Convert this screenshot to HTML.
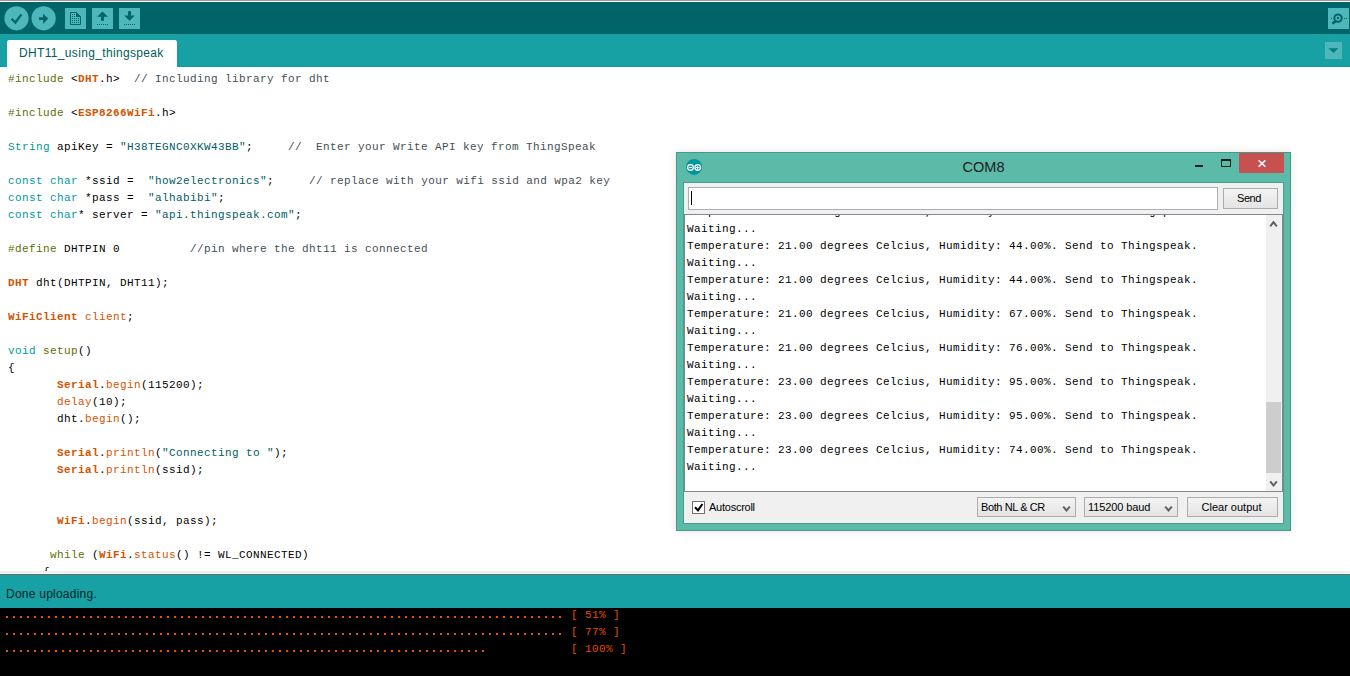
<!DOCTYPE html>
<html>
<head>
<meta charset="utf-8">
<title>DHT11_using_thingspeak | Arduino</title>
<style>
*{box-sizing:border-box;margin:0;padding:0}
html,body{width:1350px;height:676px;overflow:hidden;background:#fff;font-family:"Liberation Sans",sans-serif}
.abs{position:absolute}
#topline{left:0;top:0;width:1350px;height:2px;background:linear-gradient(#9a9a9a 0,#9a9a9a 50%,#fff 50%,#fff 100%)}
#toolbar{left:0;top:2px;width:1350px;height:32px;background:#006468}
#tabbar{left:0;top:34px;width:1350px;height:33px;background:#17a1a5;border-bottom:1px solid #0a9ba0}
#tab{left:7px;top:40px;width:170px;height:27px;background:#fff;border-radius:2.5px 2.5px 0 0;color:#005b5b;font-size:12px;letter-spacing:0.34px;line-height:26px;padding-left:12px;white-space:nowrap}
.cbtn{width:24px;height:24px;border-radius:50%;background:#4db7bb;top:4px}
.sbtn{width:21px;height:21px;background:#4db7bb;top:6px}
#editor{left:0;top:67px;width:1350px;height:505px;background:#fff;overflow:hidden}
pre{font-family:"Liberation Mono",monospace;font-size:11px;letter-spacing:0.4px;line-height:17px;white-space:pre}
#code{position:absolute;left:8px;top:4px;color:#000}
.k{color:#00979c}.s{color:#005c5f}.c{color:#434f54}.p{color:#5e6d03}.o{color:#d35400}.ob{color:#d35400;font-weight:bold}
#split{left:0;top:571px;width:1350px;height:4px;background:linear-gradient(#eee 0,#eee 50%,#fafafa 50%,#fafafa 75%,#6e6565 75%,#6e6565 100%)}
#status{left:0;top:575px;width:1350px;height:33px;background:#17a1a5;color:#002325;font-size:12px;letter-spacing:0.24px;line-height:38px;padding-left:6px}
#console{left:0;top:608px;width:1350px;height:68px;background:#000;overflow:hidden}
#console pre{position:absolute;left:4px;top:-1px;color:#e34c00}
.dots{position:absolute;left:6px;height:2px;background:repeating-linear-gradient(90deg,#e9520a 0,#e9520a 2px,transparent 2px,transparent 7px)}
/* serial monitor window */
#win{left:676px;top:152px;width:615px;height:379px;background:#5bbaa8;border:1px solid #46998a;box-shadow:0 0 7px rgba(60,0,0,.13)}
#wintitle{left:0;top:0;width:613px;height:30px;text-align:center;font-size:14.5px;line-height:29px;color:#1e1e1e}
#inner{left:7px;top:30px;width:599px;height:340px;background:#f0f0f0;box-shadow:0 0 0 1px #4b9c8d}
#input{left:4px;top:4px;width:530px;height:23px;background:#fff;border:1px solid #abadb3}
#caret{left:7px;top:8px;width:1px;height:14px;background:#000}
#send{left:539px;top:5px;width:55px;height:21px}
.btn{border:1px solid #acacac;background:linear-gradient(#f3f3f3,#e4e4e4);font-size:11px;letter-spacing:-0.4px;color:#000;text-align:center;line-height:19px;white-space:nowrap}
#out{left:0;top:31px;width:599px;height:278px;background:#fff;border:1px solid #828790;overflow:hidden}
#out pre{position:absolute;left:2px;top:-11px;color:#000}
#sbar{left:581px;top:0;width:16px;height:276px;background:#f0f0f0}
#thumb{left:0;top:187px;width:15px;height:71px;background:#cdcdcd}
.combo{border:1px solid #acacac;background:linear-gradient(#f3f3f3,#e4e4e4);font-size:11px;letter-spacing:-0.4px;color:#000;line-height:18px;padding-left:3px;height:20px;top:314px;white-space:nowrap}
</style>
</head>
<body>
<div id="topline" class="abs"></div>
<div id="toolbar" class="abs">
<svg class="abs" style="left:0;top:0" width="1350" height="32" viewBox="0 2 1350 32">
  <circle cx="16.5" cy="18.3" r="12.1" fill="#4db7bb"/>
  <circle cx="43.6" cy="18.3" r="12.1" fill="#4db7bb"/>
  <path d="M11.5 18.7 L15.4 22.5 L21.4 14.4" fill="none" stroke="#006468" stroke-width="2.3"/>
  <path d="M39.1 17.2 H43.1 V13.8 L48.2 18.6 L43.1 24.1 V20 H39.1 Z" fill="#006468"/>
  <rect x="65" y="8" width="21" height="21" fill="#4db7bb"/>
  <rect x="92" y="8" width="21" height="21" fill="#4db7bb"/>
  <rect x="119" y="8" width="21" height="21" fill="#4db7bb"/>
  <rect x="1328" y="8" width="21" height="21" fill="#4db7bb"/>
  <!-- new file -->
  <path d="M70.5 12.5 H76.3 L80.5 16.7 V24.5 H70.5 Z" fill="none" stroke="#006468" stroke-width="1"/>
  <path d="M76 12 L81 17 H76 Z" fill="#006468"/>
  <g fill="#006468">
    <rect x="72" y="14" width="1" height="1"/><rect x="74" y="14" width="1" height="1"/>
    <rect x="72" y="16" width="1" height="1"/><rect x="74" y="16" width="1" height="1"/>
    <rect x="72" y="18" width="1" height="1"/><rect x="74" y="18" width="1" height="1"/><rect x="76" y="18" width="1" height="1"/><rect x="78" y="18" width="1" height="1"/>
    <rect x="72" y="20" width="1" height="1"/><rect x="74" y="20" width="1" height="1"/><rect x="76" y="20" width="1" height="1"/><rect x="78" y="20" width="1" height="1"/>
    <rect x="72" y="22" width="1" height="1"/><rect x="74" y="22" width="1" height="1"/><rect x="76" y="22" width="1" height="1"/><rect x="78" y="22" width="1" height="1"/>
  </g>
  <!-- open (up arrow) -->
  <path d="M102.5 11.5 L107.9 16.7 H104 V20.7 H101 V16.7 H97.1 Z" fill="#006468"/>
  <g fill="#006468">
    <rect x="97" y="24" width="1" height="1"/><rect x="99" y="24" width="1" height="1"/><rect x="101" y="24" width="1" height="1"/><rect x="103" y="24" width="1" height="1"/><rect x="105" y="24" width="1" height="1"/><rect x="107" y="24" width="1" height="1"/>
  </g>
  <!-- save (down arrow) -->
  <path d="M128 11.3 H131 V15.4 H134.9 L129.5 20.8 L124.1 15.4 H128 Z" fill="#006468"/>
  <g fill="#006468">
    <rect x="124" y="24" width="1" height="1"/><rect x="126" y="24" width="1" height="1"/><rect x="128" y="24" width="1" height="1"/><rect x="130" y="24" width="1" height="1"/><rect x="132" y="24" width="1" height="1"/><rect x="134" y="24" width="1" height="1"/>
  </g>
  <!-- serial monitor -->
  <circle cx="1338" cy="18.1" r="3.7" fill="none" stroke="#006468" stroke-width="2"/>
  <rect x="1337" y="17" width="2" height="2" fill="#006468"/>
  <path d="M1335.6 20.9 L1332.4 23.7" stroke="#006468" stroke-width="2.6"/>
  <rect x="1331" y="18" width="1" height="1" fill="#006468"/>
  <rect x="1344" y="18" width="1" height="1" fill="#006468"/>
  <rect x="1346" y="18" width="1" height="1" fill="#006468"/>
</svg>
</div>
<div id="tabbar" class="abs"></div>
<div id="tab" class="abs">DHT11_using_thingspeak</div>
<svg class="abs" style="left:1325px;top:42px" width="17" height="17" viewBox="0 0 17 17"><rect width="17" height="17" fill="#4db7bb"/><path d="M3.7 6.2 H13.3 L8.5 11 Z" fill="#007e82"/></svg>
<div id="editor" class="abs">
<pre id="code"><span class="p">#include</span> &lt;<span class="ob">DHT</span>.h&gt;  <span class="c">// Including library for dht</span>

<span class="p">#include</span> &lt;<span class="ob">ESP8266WiFi</span>.h&gt;

<span class="k">String</span> apiKey = <span class="s">"H38TEGNC0XKW43BB"</span>;     <span class="c">//  Enter your Write API key from ThingSpeak</span>

<span class="k">const</span> <span class="k">char</span> *ssid =  <span class="s">"how2electronics"</span>;     <span class="c">// replace with your wifi ssid and wpa2 key</span>
<span class="k">const</span> <span class="k">char</span> *pass =  <span class="s">"alhabibi"</span>;
<span class="k">const</span> <span class="k">char</span>* server = <span class="s">"api.thingspeak.com"</span>;

<span class="p">#define</span> DHTPIN 0          <span class="c">//pin where the dht11 is connected</span>

<span class="ob">DHT</span> dht(DHTPIN, DHT11);

<span class="ob">WiFiClient</span> <span class="o">client</span>;

<span class="k">void</span> <span class="p">setup</span>()
{
       <span class="ob">Serial</span>.<span class="o">begin</span>(115200);
       <span class="o">delay</span>(10);
       dht.<span class="o">begin</span>();

       <span class="ob">Serial</span>.<span class="o">println</span>(<span class="s">"Connecting to "</span>);
       <span class="ob">Serial</span>.<span class="o">println</span>(ssid);


       <span class="ob">WiFi</span>.<span class="o">begin</span>(ssid, pass);

      <span class="p">while</span> (<span class="ob">WiFi</span>.<span class="o">status</span>() != WL_CONNECTED)
     {
</pre>
</div>
<div id="split" class="abs"></div>
<div id="status" class="abs">Done uploading.</div>
<div id="console" class="abs">
<div class="dots" style="top:8px;width:555px"></div>
<div class="dots" style="top:25px;width:555px"></div>
<div class="dots" style="top:42px;width:478px"></div>
<pre>                                                                                 [ 51% ]
                                                                                 [ 77% ]
                                                                                 [ 100% ]
</pre></div>

<div id="win" class="abs">
  <svg class="abs" style="left:8px;top:5px" width="18" height="18" viewBox="0 0 18 18">
    <circle cx="9.1" cy="8.9" r="8" fill="#00979c"/>
    <circle cx="5.5" cy="9.45" r="2.8" fill="none" stroke="#fff" stroke-width="1.3"/>
    <circle cx="12.7" cy="9.45" r="2.8" fill="none" stroke="#fff" stroke-width="1.3"/>
    <path d="M4.1 9.5H7M11.2 9.5H14.2M12.7 8V11" stroke="#fff" stroke-width="1"/>
  </svg>
  <div id="wintitle" class="abs">COM8</div>
  <svg class="abs" style="left:505px;top:0" width="108" height="22" viewBox="1182 153 108 22">
    <rect x="1195" y="165" width="8" height="2" fill="#1e1e1e"/>
    <path d="M1221.5 160.5 H1230.5 V166.5 H1221.5 Z" fill="none" stroke="#1e1e1e" stroke-width="1"/>
    <rect x="1221" y="159" width="10" height="2" fill="#1e1e1e"/>
    <rect x="1239" y="153" width="45" height="20" fill="#c75050"/>
    <path d="M1258.6 160.2 L1265.4 166.8 M1265.4 160.2 L1258.6 166.8" stroke="#fff" stroke-width="1.6"/>
  </svg>
  <div id="inner" class="abs">
    <div id="input" class="abs"></div>
    <div id="caret" class="abs"></div>
    <div id="send" class="abs btn" style="text-indent:-3px">Send</div>
    <div id="out" class="abs">
<pre>Temperature: 21.00 degrees Celcius, Humidity: 44.00%. Send to Thingspeak.
Waiting...
Temperature: 21.00 degrees Celcius, Humidity: 44.00%. Send to Thingspeak.
Waiting...
Temperature: 21.00 degrees Celcius, Humidity: 44.00%. Send to Thingspeak.
Waiting...
Temperature: 21.00 degrees Celcius, Humidity: 67.00%. Send to Thingspeak.
Waiting...
Temperature: 21.00 degrees Celcius, Humidity: 76.00%. Send to Thingspeak.
Waiting...
Temperature: 23.00 degrees Celcius, Humidity: 95.00%. Send to Thingspeak.
Waiting...
Temperature: 23.00 degrees Celcius, Humidity: 95.00%. Send to Thingspeak.
Waiting...
Temperature: 23.00 degrees Celcius, Humidity: 74.00%. Send to Thingspeak.
Waiting...
</pre>
      <div id="sbar" class="abs"><div id="thumb" class="abs"></div>
        <svg class="abs" style="left:0;top:0" width="16" height="276" viewBox="1266 215 16 276">
          <path d="M1270.2 226.4 L1273.5 222.2 L1276.8 226.4" fill="none" stroke="#606060" stroke-width="2"/>
          <path d="M1270.2 481.3 L1273.5 485.5 L1276.8 481.3" fill="none" stroke="#606060" stroke-width="2"/>
        </svg>
      </div>
    </div>
    <div class="abs" style="left:8px;top:318px;width:13px;height:13px;background:#fff;border:1px solid #707070"></div>
    <svg class="abs" style="left:8px;top:318px" width="13" height="13" viewBox="692 501 13 13"><path d="M695 507.3 L698 510.4 L702.4 504" fill="none" stroke="#000" stroke-width="2"/></svg>
    <div class="abs" style="left:25px;top:316px;font-size:11px;letter-spacing:-0.25px;line-height:16px;color:#000">Autoscroll</div>
    <div class="abs combo" style="left:293px;width:99px">Both NL &amp; CR<svg class="abs" style="left:84px;top:7px" width="9" height="7" viewBox="0 0 9 7"><path d="M1.2 1.6 L4.5 5.4 L7.8 1.6" fill="none" stroke="#606060" stroke-width="2"/></svg></div>
    <div class="abs combo" style="left:400px;width:94px;letter-spacing:-0.1px">115200 baud<svg class="abs" style="left:79px;top:7px" width="9" height="7" viewBox="0 0 9 7"><path d="M1.2 1.6 L4.5 5.4 L7.8 1.6" fill="none" stroke="#606060" stroke-width="2"/></svg></div>
    <div class="abs btn" style="left:503px;top:314px;width:91px;height:20px;line-height:18px;letter-spacing:0;text-indent:-2px">Clear output</div>
  </div>
</div>
</body>
</html>
